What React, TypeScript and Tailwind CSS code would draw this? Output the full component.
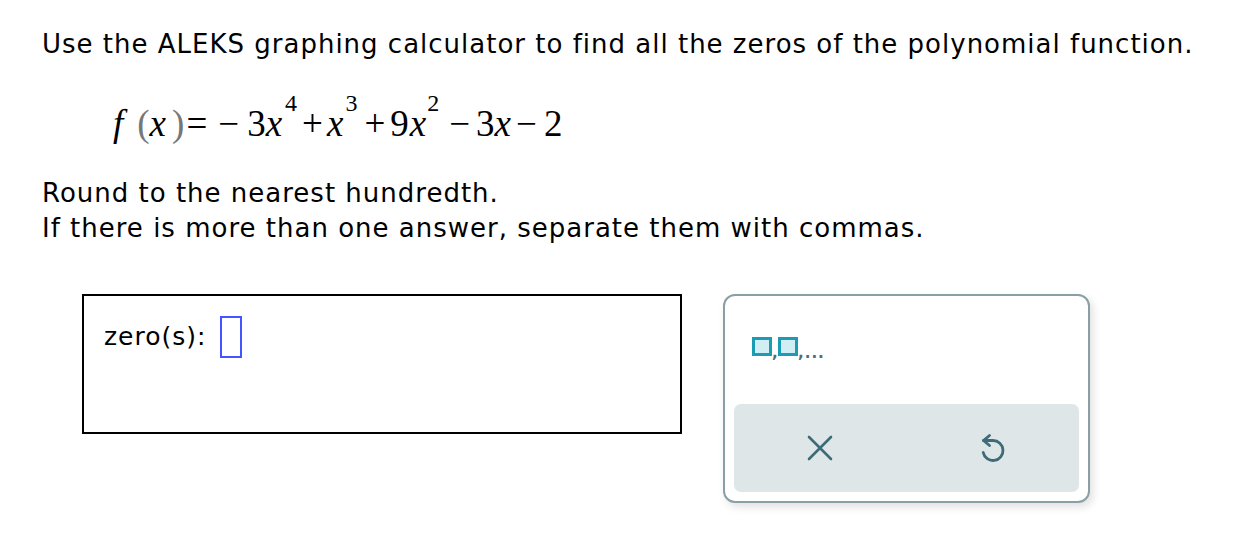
const sans = "font-['DejaVu_Sans','Verdana',sans-serif]";
const serif = "font-['Liberation_Serif','Times_New_Roman',serif]";

function Sup({ children, className = "" }: { children: React.ReactNode; className?: string }) {
  return (
    <span className={`relative -top-[25px] text-[24px] not-italic ${className}`}>{children}</span>
  );
}

function Formula() {
  return (
    <div className={`${serif} ml-[71px] mt-[43px] flex items-baseline text-[37px] leading-none text-black`}>
      <span className="italic">f</span>
      <span className="ml-[14px] text-[#777]">(</span>
      <span className="italic">x</span>
      <span className="ml-[6px] text-[#777]">)</span>
      <span className="ml-[2px]">=</span>
      <span className="ml-[11px]">−</span>
      <span className="ml-[8px]">3</span>
      <span className="italic">x</span>
      <Sup className="ml-[3px]">4</Sup>
      <span className="ml-[5px]">+</span>
      <span className="ml-[4px] italic">x</span>
      <Sup className="ml-[2px]">3</Sup>
      <span className="ml-[7px]">+</span>
      <span className="ml-[5px]">9</span>
      <span className="ml-[1px] italic">x</span>
      <Sup className="ml-[1px]">2</Sup>
      <span className="ml-[10px]">−</span>
      <span className="ml-[6px]">3</span>
      <span className="italic">x</span>
      <span className="ml-[5px]">−</span>
      <span className="ml-[7px]">2</span>
    </div>
  );
}

function TemplateIcon() {
  return (
    <div className="flex items-end text-[#4a6f7b]">
      <span className="h-[19px] w-[20px] border-[3px] border-[#1a9cb5] bg-[#d0eef3]" />
      <span className="mb-[-5px] w-[6px] text-[15px] font-bold leading-none">,</span>
      <span className="h-[19px] w-[20px] border-[3px] border-[#1a9cb5] bg-[#d0eef3]" />
      <span className="mb-[-5px] text-[15px] font-bold leading-none tracking-[1px]">,...</span>
    </div>
  );
}

function ClearIcon() {
  return (
    <svg width="26" height="26" viewBox="0 0 26 26" fill="none" stroke="#3d6b78" strokeWidth="2.6" strokeLinecap="round">
      <path d="M2 2L24 24M24 2L2 24" />
    </svg>
  );
}

function UndoIcon() {
  return (
    <svg width="24" height="30" viewBox="11 7.5 24 30" fill="none" stroke="#3d6b78" strokeWidth="2.8" strokeLinecap="round" strokeLinejoin="round">
      <path d="M19.5 10L13.5 15L19.5 20" />
      <path d="M13.5 15H23A10 10 0 1 1 13.2 27" />
    </svg>
  );
}

export default function App() {
  return (
    <div className={`${sans} min-h-screen bg-white px-[42px] pt-[26px] text-black`}>
      <p className="text-[26px] leading-[36px] tracking-[1px]">
        Use the ALEKS graphing calculator to find all the zeros of the polynomial function.
      </p>
      <Formula />
      <div className="mt-[34px] text-[26px] leading-[35px] tracking-[1px]">
        <p>Round to the nearest hundredth.</p>
        <p>If there is more than one answer, separate them with commas.</p>
      </div>
      <div className="mt-[48px] flex items-start gap-[41px]">
        <div className="ml-[40px] flex h-[140px] w-[600px] items-start border-2 border-black px-[20px] pt-[20px]">
          <div className="flex items-center">
            <span className="text-[25px] leading-[30px] tracking-[1px]">zero(s):</span>
            <span className="ml-[14px] h-[42px] w-[22px] border-2 border-[#4455ff]" />
          </div>
        </div>
        <div className="flex h-[209px] w-[367px] flex-col rounded-[12px] border-2 border-[#8a9fa5] bg-white px-[9px] pb-[9px] shadow-[3px_4px_8px_rgba(0,0,0,0.12)]">
          <div className="flex-1 pl-[18px] pt-[41px]">
            <TemplateIcon />
          </div>
          <div className="grid h-[88px] grid-cols-2 items-center rounded-[7px] bg-[#dfe6e8]">
            <div className="flex justify-center">
              <ClearIcon />
            </div>
            <div className="flex justify-center">
              <UndoIcon />
            </div>
          </div>
        </div>
      </div>
    </div>
  );
}
